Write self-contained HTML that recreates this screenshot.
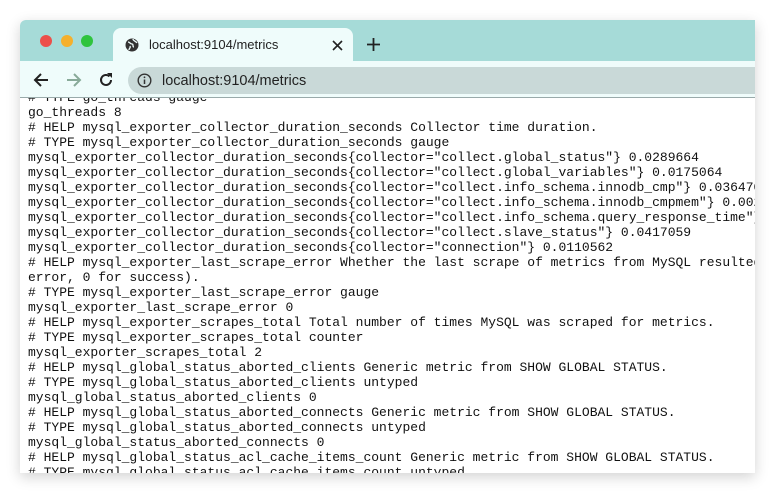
<!DOCTYPE html>
<html><head><style>
body{margin:0;width:775px;height:494px;background:#fff;overflow:hidden;position:relative;font-family:"Liberation Sans",sans-serif}
.win{position:absolute;left:20px;top:20px;width:735px;height:453px;overflow:hidden;box-shadow:0 4px 14px rgba(0,0,0,.18);border-radius:6px 0 0 0;background:#fff}
.tabbar{position:absolute;left:0;top:0;width:735px;height:41px;background:#a6dbd8}
.dot{position:absolute;top:15px;width:12px;height:12px;border-radius:50%}
.tab{position:absolute;left:93px;top:8px;width:240px;height:35px;background:#effcfb;border-radius:8px 8px 0 0}
.tab span{position:absolute;left:36px;top:9px;font-size:13px;color:#222}
.tb{position:absolute;left:0;top:41px;width:735px;height:36px;background:#effcfb;border-bottom:1px solid #9aa}
.url{position:absolute;left:108px;top:5px;width:640px;height:27px;background:#c9d9d8;border-radius:14px}
.url span{position:absolute;left:34px;top:6px;font-size:14.5px;color:#222}
pre{position:absolute;left:8px;margin:0;font-family:"Liberation Mono",monospace;font-size:13px;line-height:15px;color:#111;white-space:pre}
.content{position:absolute;left:0;top:78px;width:735px;height:375px;overflow:hidden;background:#fff}
</style></head><body>
<div class="win">
<div class="content"><pre style="top:-8px;left:8px"># TYPE go_threads gauge
go_threads 8
# HELP mysql_exporter_collector_duration_seconds Collector time duration.
# TYPE mysql_exporter_collector_duration_seconds gauge
mysql_exporter_collector_duration_seconds{collector="collect.global_status"} 0.0289664
mysql_exporter_collector_duration_seconds{collector="collect.global_variables"} 0.0175064
mysql_exporter_collector_duration_seconds{collector="collect.info_schema.innodb_cmp"} 0.0364708
mysql_exporter_collector_duration_seconds{collector="collect.info_schema.innodb_cmpmem"} 0.0023
mysql_exporter_collector_duration_seconds{collector="collect.info_schema.query_response_time"} 0
mysql_exporter_collector_duration_seconds{collector="collect.slave_status"} 0.0417059
mysql_exporter_collector_duration_seconds{collector="connection"} 0.0110562
# HELP mysql_exporter_last_scrape_error Whether the last scrape of metrics from MySQL resulted in an
error, 0 for success).
# TYPE mysql_exporter_last_scrape_error gauge
mysql_exporter_last_scrape_error 0
# HELP mysql_exporter_scrapes_total Total number of times MySQL was scraped for metrics.
# TYPE mysql_exporter_scrapes_total counter
mysql_exporter_scrapes_total 2
# HELP mysql_global_status_aborted_clients Generic metric from SHOW GLOBAL STATUS.
# TYPE mysql_global_status_aborted_clients untyped
mysql_global_status_aborted_clients 0
# HELP mysql_global_status_aborted_connects Generic metric from SHOW GLOBAL STATUS.
# TYPE mysql_global_status_aborted_connects untyped
mysql_global_status_aborted_connects 0
# HELP mysql_global_status_acl_cache_items_count Generic metric from SHOW GLOBAL STATUS.
# TYPE mysql_global_status_acl_cache_items_count untyped</pre></div>
<div class="tabbar">
<div class="dot" style="left:20px;background:#ec4f4a"></div>
<div class="dot" style="left:41px;background:#f5b02c"></div>
<div class="dot" style="left:61px;background:#2fc43e"></div>
<div class="tab">
<svg style="position:absolute;left:12px;top:10px" width="14" height="14" viewBox="0 0 14 14"><circle cx="7" cy="7" r="6.5" fill="#333"/><path d="M3 4c2 0 2 2 4 2s0 3 2 3M8 1c0 2 3 2 4 4M4 12c0-2 2-2 1-4" stroke="#effcfb" stroke-width="1.3" fill="none"/></svg>
<span>localhost:9104/metrics</span>
<svg style="position:absolute;left:219px;top:12px" width="11" height="11" viewBox="0 0 11 11"><path d="M1 1l9 9M10 1l-9 9" stroke="#222" stroke-width="1.6"/></svg>
</div>
<svg style="position:absolute;left:347px;top:18px" width="13" height="13" viewBox="0 0 13 13"><path d="M6.5 0v13M0 6.5h13" stroke="#222" stroke-width="1.8"/></svg>
</div>
<div class="tb">
<svg style="position:absolute;left:13px;top:11px" width="16" height="16" viewBox="0 0 16 16"><path d="M15 8H2M8 2L2 8l6 6" stroke="#222" stroke-width="2" fill="none"/></svg>
<svg style="position:absolute;left:46px;top:11px" width="16" height="16" viewBox="0 0 16 16"><path d="M1 8h13M8 2l6 6-6 6" stroke="#8a9" stroke-width="2" fill="none"/></svg>
<svg style="position:absolute;left:78px;top:11px" width="16" height="16" viewBox="0 0 16 16"><path d="M13 8a5 5 0 1 1-1.5-3.6" stroke="#222" stroke-width="2" fill="none"/><path d="M9 1h5v5z" fill="#222"/></svg>
<div class="url" style="top:6px">
<svg style="position:absolute;left:9px;top:6px" width="15" height="15" viewBox="0 0 15 15"><circle cx="7.5" cy="7.5" r="6.3" stroke="#333" stroke-width="1.4" fill="none"/><path d="M7.5 6.5v4.5" stroke="#333" stroke-width="1.5"/><circle cx="7.5" cy="4.3" r=".9" fill="#333"/></svg>
<span>localhost:9104/metrics</span>
</div>
</div>
</div>
</body></html>
